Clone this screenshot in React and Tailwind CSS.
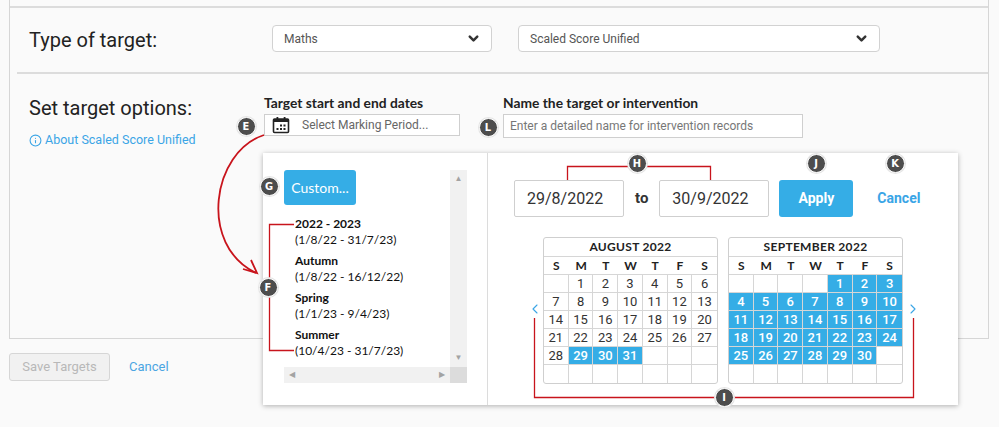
import React from 'react';
import { ChevronDown, ChevronLeft, ChevronRight, Info } from 'lucide-react';

const BLUE = 'bg-[#35ade6]';

const Marker = ({ letter, x, y }) => (
  <div
    className="absolute w-[19px] h-[19px] rounded-full bg-[#4d4d4d] border border-white text-white flex items-center justify-center text-[11px] font-bold leading-none font-['Liberation_Sans_Narrow','DejaVu_Sans_Condensed',sans-serif] shadow-[0_0_0_1px_#e5e5e5]"
    style={{ left: x - 9.5, top: y - 9.5 }}
  >
    {letter}
  </div>
);

const CalendarIcon = () => (
  <svg width="18" height="18" viewBox="0 0 18 18" fill="none">
    <rect x="1.5" y="3" width="15" height="13.5" rx="1" stroke="#222" strokeWidth="1.6" />
    <rect x="1.5" y="3" width="15" height="3" fill="#222" />
    <rect x="4.5" y="1" width="1.8" height="4" fill="#222" />
    <rect x="11.7" y="1" width="1.8" height="4" fill="#222" />
    <rect x="8" y="8.5" width="2" height="2" fill="#222" />
    <rect x="11.5" y="8.5" width="2" height="2" fill="#222" />
    <rect x="4.5" y="12" width="2" height="2" fill="#222" />
    <rect x="8" y="12" width="2" height="2" fill="#222" />
    <rect x="11.5" y="12" width="2" height="2" fill="#222" />
  </svg>
);

const Select = ({ value, width }) => (
  <div className={`${width} h-[27px] bg-white border border-[#d2d2d2] rounded-[4px] flex items-center justify-between pl-[11px] pr-[10px]`}>
    <span className="text-[12px] text-[#555]">{value}</span>
    <ChevronDown size={15} strokeWidth={4} className="text-[#333]" />
  </div>
);

const buildWeeks = (offset, days, selectedFrom) => {
  const cells = [];
  for (let i = 0; i < offset; i++) cells.push(null);
  for (let d = 1; d <= days; d++) cells.push(d);
  while (cells.length < 42) cells.push(null);
  return cells.map((d) => ({ d, sel: d !== null && d >= selectedFrom }));
};

const Calendar = ({ title, offset, days, selectedFrom }) => {
  const cells = buildWeeks(offset, days, selectedFrom);
  return (
    <div className="w-[175px] border border-[#cfcfcf] rounded-[3px] overflow-hidden bg-white">
      <div className="h-[19px] border-b border-[#d6d6d6] flex items-center justify-center text-[12px] font-bold tracking-[0.3px] text-[#222] font-['Lato',sans-serif]">
        {title}
      </div>
      <div className="grid grid-cols-7 h-[18px] border-b border-[#d6d6d6]">
        {['S', 'M', 'T', 'W', 'T', 'F', 'S'].map((n, i) => (
          <div key={i} className="flex items-center justify-center text-[12px] font-bold text-[#222] font-['Lato',sans-serif]">
            {n}
          </div>
        ))}
      </div>
      <div className="grid grid-cols-7">
        {cells.map((c, i) => (
          <div
            key={i}
            className={`h-[18px] flex items-center justify-center text-[13px] leading-none ${
              i % 7 !== 6 ? 'border-r' : ''
            } ${i < 35 ? 'border-b' : ''} border-[#d6d6d6] ${c.sel ? 'bg-[#35ade6] text-white font-medium' : 'text-[#333]'}`}
          >
            {c.d}
          </div>
        ))}
      </div>
    </div>
  );
};

const periods = [
  ['2022 - 2023', '(1/8/22 - 31/7/23)'],
  ['Autumn', '(1/8/22 - 16/12/22)'],
  ['Spring', '(1/1/23 - 9/4/23)'],
  ['Summer', '(10/4/23 - 31/7/23)'],
];

export default function App() {
  return (
    <div className="relative w-[999px] h-[427px] overflow-hidden bg-[#fafafa] font-['Roboto',sans-serif] text-[#222]">
      {/* main panel */}
      <div className="ml-[9px] w-[980px] h-[339px] border-x border-b border-[#d6d6d6] pt-[6px]">
        <div className="border-t-2 border-[#dcdcdc]">
          <div className="flex items-start h-[64px] pt-[17px]">
            <div className="w-[262px] pl-[19px] text-[20px] leading-[30px] text-[#222]">Type of target:</div>
            <Select value="Maths" width="w-[220px]" />
            <div className="w-[26px]" />
            <Select value="Scaled Score Unified" width="w-[362px]" />
          </div>
          <div className="ml-[7px] border-t-2 border-[#dcdcdc]" />
          <div className="flex pt-[20px]">
            <div className="w-[254px] pl-[19px]">
              <div className="text-[20px] leading-[28px] text-[#222]">Set target options:</div>
              <div className="mt-[9px] flex items-center gap-[3px] text-[12.5px] text-[#3aa5e6]">
                <Info size={13} strokeWidth={2} />
                <span>About Scaled Score Unified</span>
              </div>
            </div>
            <div className="w-[196px]">
              <div className="text-[13.8px] font-bold text-[#222] leading-[18px] font-['Lato',sans-serif]">Target start and end dates</div>
              <div className="mt-[2px] h-[22px] bg-white border border-[#cfcfcf] flex items-center pl-[7px]">
                <CalendarIcon />
                <span className="ml-[12px] text-[12px] text-[#666]">Select Marking Period...</span>
              </div>
            </div>
            <div className="w-[43px]" />
            <div className="w-[300px]">
              <div className="text-[13.8px] font-bold text-[#222] leading-[18px] font-['Lato',sans-serif]">Name the target or intervention</div>
              <div className="mt-[2px] h-[24px] bg-white border border-[#cfcfcf] flex items-center pl-[6px]">
                <span className="text-[12px] text-[#777]">Enter a detailed name for intervention records</span>
              </div>
            </div>
          </div>
        </div>
      </div>

      {/* footer buttons */}
      <div className="flex items-center ml-[9px] mt-[14px]">
        <div className="w-[101px] h-[28px] rounded-[3px] bg-[#f1f1f1] border border-[#d6d6d6] flex items-center justify-center text-[13px] text-[#b8b8b8]">
          Save Targets
        </div>
        <span className="ml-[19px] text-[13px] text-[#4aa5e2]">Cancel</span>
      </div>

      {/* date picker popup */}
      <div className="absolute left-[263px] top-[153px] w-[695px] h-[252px] bg-white shadow-[0_1px_5px_rgba(0,0,0,0.3)] flex">
        <div className="w-[225px] border-r border-[#dcdcdc] pt-[17px] pl-[21px]">
          <div className="w-[183px] h-[213px] flex flex-col">
            <div className="flex h-[197px]">
              <div className="w-[166px]">
                <div className={`w-[72px] h-[35px] rounded-[3px] ${BLUE} text-white text-[14px] flex items-center justify-center font-['Lato',sans-serif]`}>
                  Custom...
                </div>
                <div className="mt-[11px] pl-[11px] flex flex-col gap-[5px] font-['Lato',sans-serif] text-[12px] text-[#111]">
                  {periods.map(([name, range]) => (
                    <div key={name} className="leading-[16px]">
                      <div className="font-bold">{name}</div>
                      <div>{range}</div>
                    </div>
                  ))}
                </div>
              </div>
              <div className="w-[17px] bg-[#f1f1f1] flex flex-col items-center justify-between py-[5px] text-[#a3a3a3] text-[8px] leading-none">
                <span>▲</span>
                <span>▼</span>
              </div>
            </div>
            <div className="flex h-[16px]">
              <div className="w-[166px] bg-[#f1f1f1] flex items-center justify-between px-[5px] text-[#a3a3a3] text-[8px] leading-none">
                <span>◀</span>
                <span>▶</span>
              </div>
              <div className="w-[17px] bg-[#dcdcdc]" />
            </div>
          </div>
        </div>

        <div className="flex-1">
          <div className="flex items-center pt-[27px] pl-[26px]">
            <div className="w-[110px] h-[37px] border border-[#cfcfcf] rounded-[2px] flex items-center pl-[12px] text-[16px] text-[#333]">
              29/8/2022
            </div>
            <span className="mx-[11px] text-[15px] font-bold text-[#333]">to</span>
            <div className="w-[110px] h-[37px] border border-[#cfcfcf] rounded-[2px] flex items-center pl-[12px] text-[16px] text-[#333]">
              30/9/2022
            </div>
            <div className={`ml-[10px] w-[74px] h-[37px] rounded-[3px] ${BLUE} text-white text-[14px] font-bold flex items-center justify-center`}>
              Apply
            </div>
            <span className="ml-[24px] text-[14px] font-bold text-[#3aa5e6]">Cancel</span>
          </div>
          <div className="flex items-center pl-[38px] mt-[20px]">
            <div className="w-[17px] flex justify-center text-[#3aa5e6] -mt-[4px]">
              <ChevronLeft size={16} strokeWidth={1.6} />
            </div>
            <Calendar title="AUGUST 2022" offset={1} days={31} selectedFrom={29} />
            <div className="w-[10px]" />
            <Calendar title="SEPTEMBER 2022" offset={4} days={30} selectedFrom={1} />
            <div className="w-[20px] flex justify-center text-[#3aa5e6] -mt-[4px]">
              <ChevronRight size={16} strokeWidth={1.6} />
            </div>
          </div>
        </div>
      </div>

      {/* annotation lines */}
      <svg className="absolute inset-0 pointer-events-none" width="999" height="427" fill="none">
        <path d="M264 135 C212 152 198 245 256 273" stroke="#c8141c" strokeWidth="1.8" />
        <path d="M243 269 L257 273 L251 260" stroke="#c8141c" strokeWidth="1.8" />
        <path d="M294 224.5 H269.5 V350.5 H294" stroke="#c8141c" strokeWidth="1.3" />
        <path d="M567.5 180 V166.5 H710.5 V180" stroke="#c8141c" strokeWidth="1.3" />
        <path d="M534.5 318 V397.5 H913.5 V318" stroke="#c8141c" strokeWidth="1.3" />
      </svg>

      <Marker letter="E" x={246} y={126} />
      <Marker letter="L" x={488} y={127} />
      <Marker letter="G" x={269} y={186} />
      <Marker letter="F" x={268} y={287} />
      <Marker letter="H" x={637} y={163} />
      <Marker letter="J" x={816} y={163} />
      <Marker letter="K" x={895} y={163} />
      <Marker letter="I" x={724} y={397} />
    </div>
  );
}
